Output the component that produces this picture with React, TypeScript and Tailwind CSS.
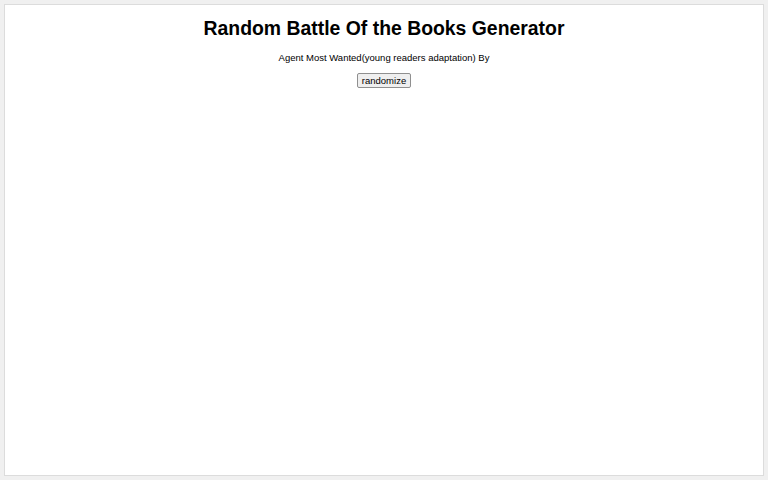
export default function App() {
  return (
    <div className="min-h-[480px] w-full bg-[#f0f0f0] p-[4px]" style={{ fontFamily: '"Liberation Sans", Arial, sans-serif' }}>
      <div className="flex h-[472px] flex-col items-center border border-[#dcdcdc] bg-white">
        <h1 className="mt-[11px] text-[19.4px] font-bold leading-[24px] text-black">Random Battle Of the Books Generator</h1>
        <p className="mt-[12px] text-[9.5px] leading-[12px] text-black">Agent Most Wanted(young readers adaptation) By</p>
        <button className="mt-[9px] rounded-[2px] border border-[#8f8f8f] bg-[#efefef] px-[4px] text-[9.5px] leading-[13px] text-black">
          randomize
        </button>
      </div>
    </div>
  );
}
